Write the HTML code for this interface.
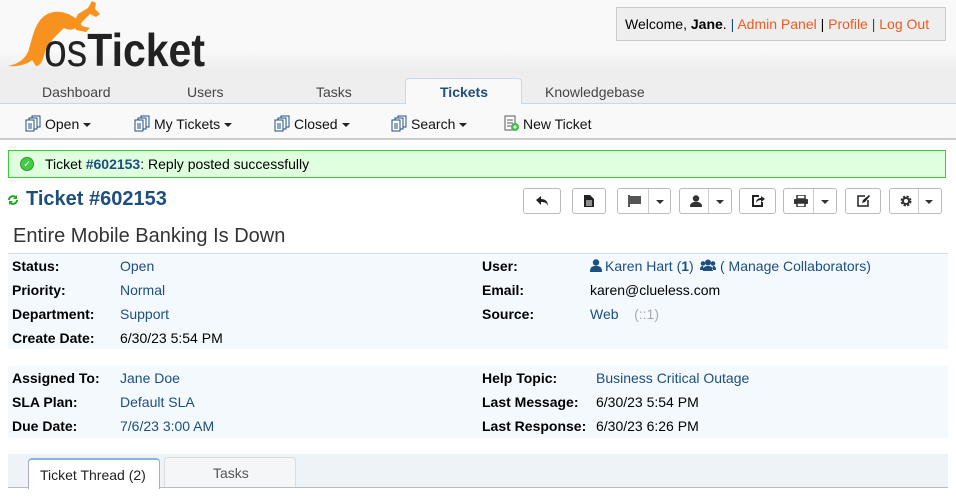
<!DOCTYPE html>
<html><head><meta charset="utf-8"><style>
*{margin:0;padding:0;box-sizing:border-box}
body{width:956px;height:503px;overflow:hidden;background:#fff;font-family:"Liberation Sans",sans-serif;font-size:14px;color:#000;position:relative}
.a{position:absolute;white-space:nowrap}
#hdr{position:absolute;left:0;top:0;width:956px;height:73px;background:linear-gradient(#f9f9f9 0,#f9f9f9 50px,#ececec 73px)}
#nav{position:absolute;left:0;top:73px;width:956px;height:31px;background:#eee;border-bottom:1px solid #c5d9ee}
#sub{position:absolute;left:0;top:104px;width:956px;height:36px;background:#f9f9f9;border-bottom:2px solid #ccc}
.nv{position:absolute;top:84px;font-size:14px;color:#444}
.sb{position:absolute;top:115px;font-size:14px;color:#111}
.sb svg{vertical-align:-3px;margin-right:3px}
.cr{display:inline-block;width:0;height:0;border-left:4px solid transparent;border-right:4px solid transparent;border-top:4px solid #222;vertical-align:2px;margin-left:4px}
.btn{position:absolute;top:188px;height:26px;border:1px solid #bbb;border-radius:3px;background:#fff}
.btn .s{position:absolute;top:0;bottom:0;border-left:1px solid #ccc}
.btn svg{position:absolute;top:6px}
.car{position:absolute;top:11px;width:0;height:0;border-left:4px solid transparent;border-right:4px solid transparent;border-top:4px solid #333}
.blk{position:absolute;left:8px;width:940px;background:#f4f9fe}
.l{position:absolute;font-weight:bold;font-size:14px;color:#000}
.v{position:absolute;font-size:14px;color:#1c4e7e}
.k{position:absolute;font-size:14px;color:#000}
</style></head><body>
<div id="hdr"></div>
<svg class="a" style="left:6px;top:0" width="205" height="70" viewBox="0 0 205 70">
<path d="M2 66 C12 64 18 60 22 52 C26 40 28 26 36 18 C44 10 56 10 66 16 C70 18 74 22 76 26 L84 28 L80 32 L70 30 L68 22 L72 14 L82 8 L86 1 L90 3 L89 9 L94 14 L90 17 L84 14 L76 22 C72 28 66 32 58 28 C50 36 40 44 38 56 C36 62 34 66 30 66 L26 60 C22 64 12 67 2 66 Z" fill="#f7921e"/>
<text x="38" y="66" font-family="Liberation Sans" font-size="46" fill="#222" textLength="161" lengthAdjust="spacingAndGlyphs">os<tspan font-weight="bold">Ticket</tspan></text>
</svg>
<div class="a" style="left:616px;top:7px;width:330px;height:34px;background:#eee;border:1px solid #ccc"></div>
<div class="a" style="left:625px;top:16px;font-size:14px">Welcome, <b>Jane</b>. <span style="color:#1c4e7e">|</span> <span style="color:#f2591f">Admin Panel</span> | <span style="color:#f2591f">Profile</span> <span style="color:#1c4e7e">|</span> <span style="color:#f2591f">Log Out</span></div>
<div id="nav"></div>
<div class="a" style="left:405px;top:78px;width:117px;height:27px;background:#f9f9f9;border:1px solid #c5d9ee;border-bottom:none;border-radius:4px 4px 0 0"></div>
<div class="nv" style="left:42px">Dashboard</div>
<div class="nv" style="left:187px">Users</div>
<div class="nv" style="left:316px">Tasks</div>
<div class="nv" style="left:440px;font-weight:bold;color:#1c4e7e">Tickets</div>
<div class="nv" style="left:545px">Knowledgebase</div>
<div id="sub"></div>
<svg width="0" height="0" style="position:absolute"><defs><g id="ic"><rect x="7" y="1" width="8" height="11" fill="#fff" stroke="#1c4e7e"/><rect x="4" y="3" width="8" height="11" fill="#fff" stroke="#1c4e7e"/><rect x="1" y="5" width="8" height="11" fill="#fff" stroke="#1c4e7e"/><path d="M3 9h4M3 11h4M3 13h4" stroke="#1c4e7e"/></g></defs></svg>
<div class="sb" style="left:25px"><svg width="17" height="17"><use href="#ic"/></svg>Open<span class="cr"></span></div>
<div class="sb" style="left:134px"><svg width="17" height="17"><use href="#ic"/></svg>My Tickets<span class="cr"></span></div>
<div class="sb" style="left:274px"><svg width="17" height="17"><use href="#ic"/></svg>Closed<span class="cr"></span></div>
<div class="sb" style="left:391px"><svg width="17" height="17"><use href="#ic"/></svg>Search<span class="cr"></span></div>
<div class="sb" style="left:503px"><svg width="17" height="17"><rect x="2" y="1" width="10" height="14" fill="#fff" stroke="#556"/><path d="M4 5h6M4 8h6M4 11h4" stroke="#556"/><circle cx="12" cy="12" r="4" fill="#4b4"/><path d="M10 12h4M12 10v4" stroke="#fff"/></svg>New Ticket</div>
<div class="a" style="left:8px;top:150px;width:938px;height:28px;background:#dfffdf;border:1px solid #3c3"></div>
<div class="a" style="left:20px;top:157px;width:14px;height:14px;border-radius:50%;background:#4c4;border:1px solid #393;color:#fff;font-size:9px;text-align:center;line-height:12px">✓</div>
<div class="a" style="left:45px;top:156px;font-size:14px">Ticket <b style="color:#1c4e7e">#602153</b>: Reply posted successfully</div>
<svg class="a" style="left:7px;top:194px" width="12" height="12" viewBox="0 0 12 12"><path d="M2 6a4 4 0 0 1 7-2.5M10 6a4 4 0 0 1-7 2.5" fill="none" stroke="#2a2" stroke-width="2"/><path d="M10 1v4H6z M2 11V7h4z" fill="#2a2"/></svg>
<div class="a" style="left:26px;top:188px;font-size:20px;font-weight:bold;color:#1c4e7e">Ticket #602153</div>
<div class="btn" style="left:523px;width:38px"><svg style="left:11px" width="14" height="12"><path d="M1 5l5-4v3c4 0 7 2 7 7c-1-3-3-4-7-4v3z" fill="#222"/></svg></div>
<div class="btn" style="left:572px;width:34px"><svg style="left:11px" width="10" height="12"><path d="M0 0h6l4 4v8H0z" fill="#222"/><path d="M2 6h6M2 8h6M2 10h6" stroke="#fff"/></svg></div>
<div class="btn" style="left:617px;width:54px"><svg style="left:10px" width="14" height="12"><path d="M1 0v12" stroke="#555" stroke-width="2"/><path d="M2 1h11v8H2z" fill="#555"/></svg><span class="s" style="left:30px"></span><span class="car" style="left:38px"></span></div>
<div class="btn" style="left:679px;width:53px"><svg style="left:10px" width="12" height="12"><circle cx="6" cy="3.5" r="3.2" fill="#333"/><path d="M0 12c0-4 2-5 6-5s6 1 6 5z" fill="#333"/></svg><span class="s" style="left:28px"></span><span class="car" style="left:36px"></span></div>
<div class="btn" style="left:739px;width:37px"><svg style="left:12px" width="13" height="12"><path d="M7 1H1v10h9V7" fill="none" stroke="#222" stroke-width="2"/><path d="M4 8c0-4 3-5 5-5V1l4 3-4 3V5c-2 0-4 1-5 3z" fill="#222"/></svg></div>
<div class="btn" style="left:783px;width:54px"><svg style="left:10px" width="14" height="12"><rect x="3" y="0" width="8" height="4" fill="none" stroke="#333" stroke-width="1.5"/><rect x="0" y="4" width="14" height="5" rx="1" fill="#333"/><rect x="3" y="8" width="8" height="4" fill="#fff" stroke="#333" stroke-width="1.5"/></svg><span class="s" style="left:29px"></span><span class="car" style="left:37px"></span></div>
<div class="btn" style="left:845px;width:36px"><svg style="left:11px" width="13" height="12"><path d="M8 1H1v10h10V5" fill="none" stroke="#222" stroke-width="1.5"/><path d="M5 8l1-3 6-5 1 1-5 6z" fill="#222"/></svg></div>
<div class="btn" style="left:889px;width:53px"><svg style="left:10px" width="12" height="12" viewBox="0 0 12 12"><circle cx="6" cy="6" r="4" fill="none" stroke="#333" stroke-width="3" stroke-dasharray="2 1.2"/><circle cx="6" cy="6" r="3" fill="none" stroke="#333" stroke-width="2"/></svg><span class="s" style="left:28px"></span><span class="car" style="left:35px"></span></div>
<div class="a" style="left:13px;top:225px;font-size:20px;color:#333">Entire Mobile Banking Is Down</div>
<div class="blk" style="top:253px;height:96px;border-top:1px solid #ddd"></div>
<div class="blk" style="top:366px;height:72px"></div>
<div class="l" style="left:12px;top:258px">Status:</div><div class="v" style="left:120px;top:258px">Open</div>
<div class="l" style="left:12px;top:282px">Priority:</div><div class="v" style="left:120px;top:282px">Normal</div>
<div class="l" style="left:12px;top:306px">Department:</div><div class="v" style="left:120px;top:306px">Support</div>
<div class="l" style="left:12px;top:330px">Create Date:</div><div class="k" style="left:120px;top:330px">6/30/23 5:54 PM</div>
<div class="l" style="left:482px;top:258px">User:</div>
<svg class="a" style="left:590px;top:259px" width="12" height="13"><circle cx="6" cy="3.5" r="3.2" fill="#1c4e7e"/><path d="M0 13c0-5 2-6 6-6s6 1 6 6z" fill="#1c4e7e"/></svg>
<div class="v" style="left:605px;top:258px">Karen Hart (<b>1</b>)</div>
<svg class="a" style="left:700px;top:259px" width="16" height="13"><circle cx="8" cy="3.5" r="3" fill="#1c4e7e"/><circle cx="3" cy="4.5" r="2.3" fill="#1c4e7e"/><circle cx="13" cy="4.5" r="2.3" fill="#1c4e7e"/><path d="M3 12c0-4 2-5 5-5s5 1 5 5z M0 11c0-3 1-4 3-4l1 4z M16 11c0-3-1-4-3-4l-1 4z" fill="#1c4e7e"/></svg>
<div class="v" style="left:720px;top:258px">( Manage Collaborators)</div>
<div class="l" style="left:482px;top:282px">Email:</div><div class="k" style="left:590px;top:282px">karen@clueless.com</div>
<div class="l" style="left:482px;top:306px">Source:</div><div class="v" style="left:590px;top:306px">Web &nbsp;&nbsp;&nbsp;<span style="color:#aaa">(::1)</span></div>
<div class="l" style="left:12px;top:370px">Assigned To:</div><div class="v" style="left:120px;top:370px">Jane Doe</div>
<div class="l" style="left:12px;top:394px">SLA Plan:</div><div class="v" style="left:120px;top:394px">Default SLA</div>
<div class="l" style="left:12px;top:418px">Due Date:</div><div class="v" style="left:120px;top:418px">7/6/23 3:00 AM</div>
<div class="l" style="left:482px;top:370px">Help Topic:</div><div class="v" style="left:596px;top:370px">Business Critical Outage</div>
<div class="l" style="left:482px;top:394px">Last Message:</div><div class="k" style="left:596px;top:394px">6/30/23 5:54 PM</div>
<div class="l" style="left:482px;top:418px">Last Response:</div><div class="k" style="left:596px;top:418px">6/30/23 6:26 PM</div>
<div class="a" style="left:8px;top:454px;width:940px;height:34px;background:#eef3f8;border-bottom:1px solid #bbb"></div>
<div class="a" style="left:28px;top:458px;width:132px;height:31px;background:#fff;border:1px solid #aac;border-top:2px solid #8ab4e0;border-bottom:none;border-radius:4px 4px 0 0"></div>
<div class="a" style="left:164px;top:457px;width:132px;height:30px;background:#f4f6f8;border:1px solid #ddd;border-bottom:none;border-radius:4px 4px 0 0"></div>
<div class="a" style="left:40px;top:467px;font-size:14px;color:#222">Ticket Thread (2)</div>
<div class="a" style="left:213px;top:465px;font-size:14px;color:#555">Tasks</div>
</body></html>
